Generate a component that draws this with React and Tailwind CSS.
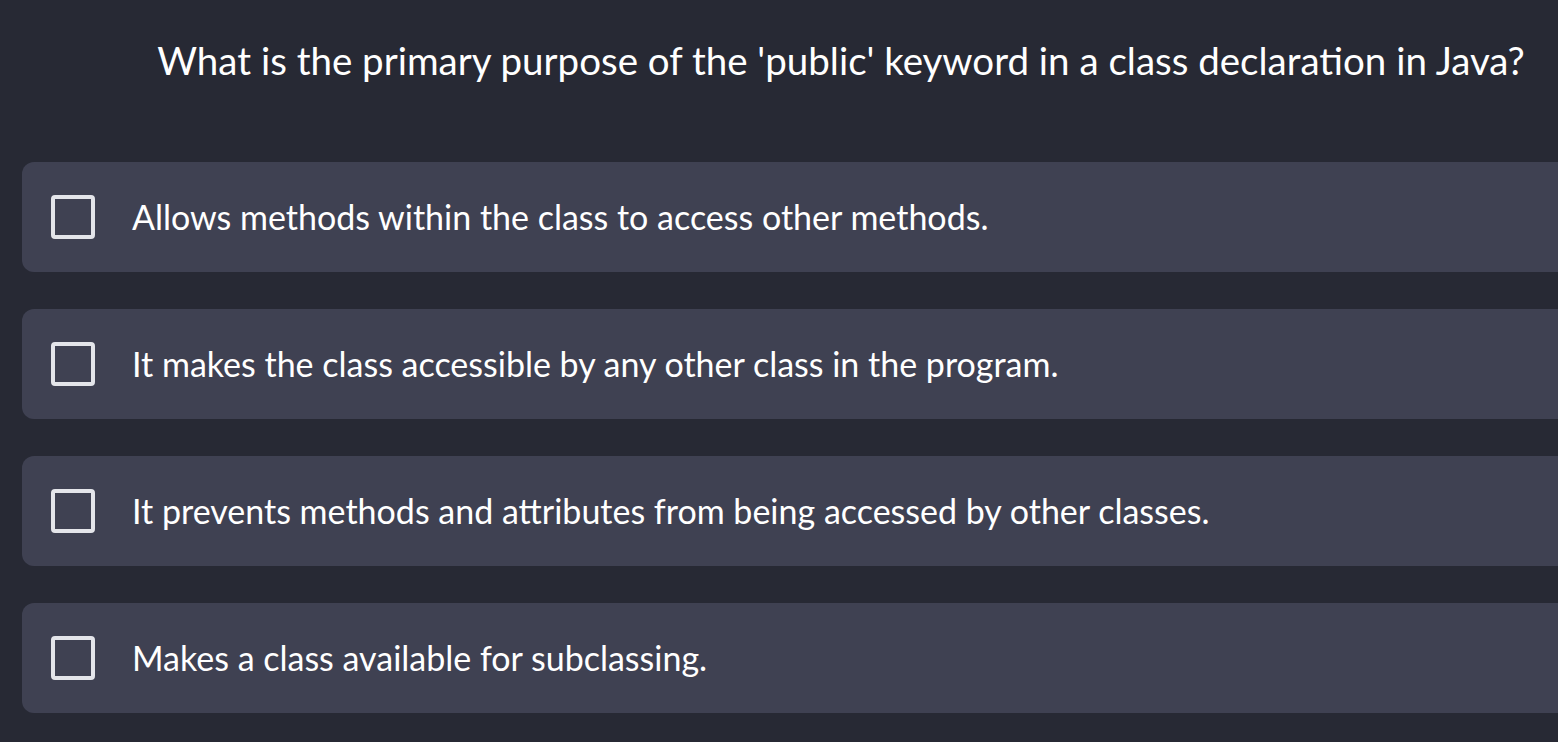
import React, { useState } from 'react';

const options = [
  'Allows methods within the class to access other methods.',
  'It makes the class accessible by any other class in the program.',
  'It prevents methods and attributes from being accessed by other classes.',
  'Makes a class available for subclassing.',
];

const Quiz = () => {
  const [checked, setChecked] = useState([]);

  const toggle = (i) => {
    setChecked((prev) => (prev.includes(i) ? prev.filter((x) => x !== i) : [...prev, i]));
  };

  return (
    <div
      className="w-[1558px] h-[742px] overflow-hidden bg-[#272934] text-white"
      style={{ fontFamily: 'Lato, "Noto Sans", sans-serif' }}
    >
      <div className="w-[1660px] pl-[22px]">
        <h1 className="h-[124px] pt-[36px] text-center text-[38.5px] leading-[48px] font-normal whitespace-nowrap">
          What is the primary purpose of the 'public' keyword in a class declaration in Java?
        </h1>
        <div className="flex flex-col gap-[37px] pt-[38px]">
          {options.map((opt, i) => (
            <button
              key={i}
              onClick={() => toggle(i)}
              className="flex h-[110px] items-center rounded-xl bg-[#3f4152] pl-[29px] text-left"
            >
              <span className="flex h-[44px] w-[44px] shrink-0 items-center justify-center rounded-[4px] border-4 border-[#e4e5ea]">
                {checked.includes(i) && <span className="h-[20px] w-[20px] bg-[#e4e5ea]" />}
              </span>
              <span className="ml-[37px] text-[34px] leading-none">{opt}</span>
            </button>
          ))}
        </div>
      </div>
    </div>
  );
};

export default function App() {
  return <Quiz />;
}
